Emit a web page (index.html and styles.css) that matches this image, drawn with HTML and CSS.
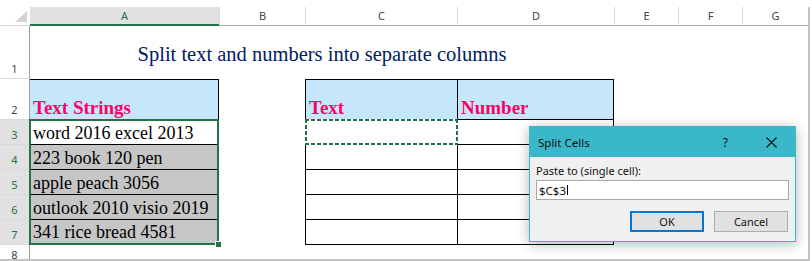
FILE: index.html
```html
<!DOCTYPE html>
<html lang="en">
<head>
    <meta charset="UTF-8">
    <meta name="viewport" content="width=device-width, initial-scale=1.0">
    <title>Split Cells</title>
    <link rel="stylesheet" href="styles.css">
</head>
<body>
    <div class="page">
        <div class="sheet">
            <!-- column headers -->
            <div class="corner"><span class="tri"></span></div>
            <div class="colhd sel">A</div>
            <div class="colhd">B</div>
            <div class="colhd">C</div>
            <div class="colhd">D</div>
            <div class="colhd">E</div>
            <div class="colhd">F</div>
            <div class="colhd">G</div>

            <!-- row 1 -->
            <div class="rn">1</div>
            <div class="title">Split text and numbers into separate columns</div>

            <!-- row 2 -->
            <div class="rn">2</div>
            <div class="cell head ca">Text Strings</div>
            <div class="cell head cc">Text</div>
            <div class="cell head cd">Number</div>

            <!-- rows 3 - 7 -->
            <div class="rn sel">3</div>
            <div class="selection">
                <div class="cell data">word 2016 excel 2013</div>
                <div class="cell data gray">223 book 120 pen</div>
                <div class="cell data gray">apple peach 3056</div>
                <div class="cell data gray">outlook 2010 visio 2019</div>
                <div class="cell data gray last">341 rice bread 4581</div>
                <span class="handle"></span>
            </div>
            <div class="cell cc ants"></div>
            <div class="cell cd"></div>

            <div class="rn sel">4</div>
            <div class="cell cc"></div>
            <div class="cell cd"></div>

            <div class="rn sel">5</div>
            <div class="cell cc"></div>
            <div class="cell cd"></div>

            <div class="rn sel">6</div>
            <div class="cell cc"></div>
            <div class="cell cd"></div>

            <div class="rn sel">7</div>
            <div class="cell cc"></div>
            <div class="cell cd"></div>

            <div class="rn">8</div>
        </div>

        <div class="dialog">
            <div class="dlg-title">
                <span class="dlg-name">Split Cells</span>
                <span class="dlg-help">?</span>
                <svg class="dlg-close" width="11" height="11" viewBox="0 0 11 11">
                    <path d="M0.5 0.5L10.5 10.5M10.5 0.5L0.5 10.5" stroke="#111" stroke-width="1.1" fill="none"/>
                </svg>
            </div>
            <div class="dlg-body">
                <label class="dlg-label">Paste to (single cell):</label>
                <div class="dlg-input">$C$3<span class="caret"></span></div>
                <div class="dlg-buttons">
                    <button class="btn ok">OK</button>
                    <button class="btn">Cancel</button>
                </div>
            </div>
        </div>
    </div>
</body>
</html>
```

FILE: styles.css
```css
* {
    margin: 0;
    padding: 0;
    box-sizing: border-box;
}

body {
    background: #fff;
    font-family: 'Noto Sans', sans-serif;
}

.page {
    position: relative;
    width: 812px;
    height: 261px;
    padding-top: 7px;
}

.sheet {
    display: grid;
    grid-template-columns: 30px 189px 86px 152px 157px 64px 64px 66px;
    grid-template-rows: 19px 53px 41px 25px 25px 25px 25px 25px 20px;
    width: 810px;
    height: 254px;
    overflow: hidden;
    border-right: 2px solid #c4c4c4;
    border-bottom: 2px solid #c4c4c4;
}

/* headers */
.corner {
    display: flex;
    justify-content: flex-end;
    align-items: flex-end;
    padding: 0 3px 3px 0;
    border-bottom: 1px solid #d6d6d6;
}

.tri {
    width: 12px;
    height: 11px;
    background: #d3d3d3;
    clip-path: polygon(100% 0, 100% 100%, 0 100%);
}

.colhd {
    border-left: 1px solid #d8d8d8;
    border-bottom: 1px solid #ababab;
    font-size: 11px;
    line-height: 18px;
    color: #444;
    text-align: center;
}

.colhd:last-child {
    border-right: 1px solid #d8d8d8;
}

.colhd.sel {
    border-left: none;
    background: #e1e1e1;
    color: #217346;
    border-bottom: 2px solid #217346;
}

.rn {
    grid-column: 1;
    display: flex;
    align-items: flex-end;
    justify-content: center;
    padding-bottom: 3px;
    border-right: 1px solid #9e9e9e;
    border-bottom: 1px solid #dadada;
    font-size: 11px;
    line-height: 13px;
    color: #444;
}

.rn.sel {
    background: #e1e1e1;
    color: #217346;
}

/* cells */
.title {
    grid-column: 2 / span 4;
    display: flex;
    align-items: flex-end;
    justify-content: center;
    padding-bottom: 13px;
    font-family: 'Liberation Serif', serif;
    font-size: 20.5px;
    line-height: 24px;
    color: #002060;
}

.cell {
    display: flex;
    align-items: flex-end;
    padding: 0 3px 1px;
    font-family: 'Liberation Serif', serif;
    font-size: 18px;
    line-height: 20px;
    color: #000;
    background: #fff;
    border-bottom: 1px solid #000;
}

.head {
    background: #c6e7fb;
    border-top: 1px solid #000;
    color: #ff0066;
    font-weight: bold;
    font-size: 19px;
}

.ca {
    border-right: 1px solid #000;
}

.cc {
    grid-column: 4;
    border-left: 1px solid #000;
}

.cd {
    grid-column: 5;
    border-left: 1px solid #000;
    border-right: 1px solid #000;
}

.ants {
    z-index: 1;
    margin: -1px -1px 0 0;
    border: none;
    background:
        repeating-linear-gradient(90deg, #217346 0 4px, transparent 4px 6px) top / 100% 2px no-repeat,
        repeating-linear-gradient(90deg, #217346 0 4px, transparent 4px 6px) bottom / 100% 2px no-repeat,
        repeating-linear-gradient(180deg, #217346 0 4px, transparent 4px 6px) left / 2px 100% no-repeat,
        repeating-linear-gradient(180deg, #217346 0 4px, transparent 4px 6px) right / 2px 100% no-repeat,
        #fff;
}

.selection {
    grid-row: span 5;
    position: relative;
    display: grid;
    grid-template-rows: 24px 25px 25px 25px 1fr;
    margin: -1px 0 0 -1px;
    border: 2px solid #217346;
}

.data {
    padding-left: 2px;
}

.gray {
    background: #c6c6c6;
}

.last {
    border-bottom: none;
}

.handle {
    position: absolute;
    right: -5px;
    bottom: -5px;
    width: 7px;
    height: 7px;
    background: #217346;
    border: 1px solid #fff;
}

/* dialog */
.dialog {
    position: absolute;
    left: 529px;
    top: 126px;
    width: 267px;
    height: 116px;
    display: flex;
    flex-direction: column;
    border: 1px solid #3ab7c8;
    background: #f0f0f0;
    box-shadow: 0 2px 12px rgba(0,0,0,0.3);
}

.dlg-title {
    display: flex;
    align-items: center;
    height: 30px;
    padding: 0 18px 0 8px;
    background: #3ab7c8;
    color: #111;
    font-size: 11.5px;
}

.dlg-help {
    margin-left: auto;
    margin-right: 38px;
    font-size: 12px;
}

.dlg-body {
    flex: 1;
    padding: 7px 6px 0;
    font-size: 11px;
    color: #111;
}

.dlg-label {
    display: block;
    line-height: 14px;
}

.dlg-input {
    display: flex;
    align-items: center;
    height: 20px;
    margin-top: 2px;
    padding-left: 2px;
    background: #fff;
    border: 1px solid #a9a9a9;
    font-size: 11.5px;
}

.caret {
    width: 1px;
    height: 10px;
    margin-left: 1px;
    background: #000;
}

.dlg-buttons {
    display: flex;
    justify-content: flex-end;
    gap: 10px;
    margin: 11px 1px 0 0;
}

.btn {
    width: 74px;
    height: 21px;
    background: #e1e1e1;
    border: 1px solid #adadad;
    font-family: 'Noto Sans', sans-serif;
    font-size: 11px;
    color: #111;
}

.btn.ok {
    border: 2px solid #0078d7;
}
```
